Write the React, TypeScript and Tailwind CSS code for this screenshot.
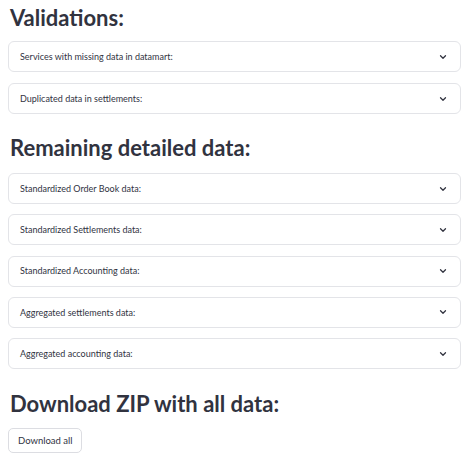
import React from "react";

const Chevron = () => (
  <svg width="10" height="10" viewBox="0 0 24 24" fill="none" stroke="#31333f" strokeWidth="3" strokeLinecap="round" strokeLinejoin="round">
    <path d="M6 9l6 6 6-6" />
  </svg>
);

function Expander({ label }: { label: string }) {
  return (
    <div className="h-[31px] border border-[#e3e4e8] rounded-[6px] flex items-center justify-between pl-[11px] pr-[12px] bg-white">
      <span className="text-[9px] text-[#31333f]">{label}</span>
      <Chevron />
    </div>
  );
}

function Heading({ children }: { children: React.ReactNode }) {
  return <h2 className="text-[22px] leading-[28px] font-bold text-[#31333f] pl-[2px]">{children}</h2>;
}

export default function App() {
  return (
    <div className="min-h-screen bg-white" style={{ fontFamily: '"Source Sans Pro", Lato, sans-serif' }}>
      <div className="w-[453px] ml-[8px]">
        <div className="pt-[3.5px]">
          <Heading>Validations:</Heading>
        </div>
        <div className="mt-[9.5px] flex flex-col gap-[11px]">
          <Expander label="Services with missing data in datamart:" />
          <Expander label="Duplicated data in settlements:" />
        </div>
        <div className="mt-[20px]">
          <Heading>Remaining detailed data:</Heading>
        </div>
        <div className="mt-[11px] flex flex-col gap-[10.3px]">
          <Expander label="Standardized Order Book data:" />
          <Expander label="Standardized Settlements data:" />
          <Expander label="Standardized Accounting data:" />
          <Expander label="Aggregated settlements data:" />
          <Expander label="Aggregated accounting data:" />
        </div>
        <div className="mt-[20.5px]">
          <Heading>Download ZIP with all data:</Heading>
        </div>
        <button className="mt-[10.5px] h-[25px] pl-[9px] pr-[8px] border border-[#dcdde2] rounded-[5px] text-[9.5px] text-[#31333f] bg-white">
          Download all
        </button>
      </div>
    </div>
  );
}
